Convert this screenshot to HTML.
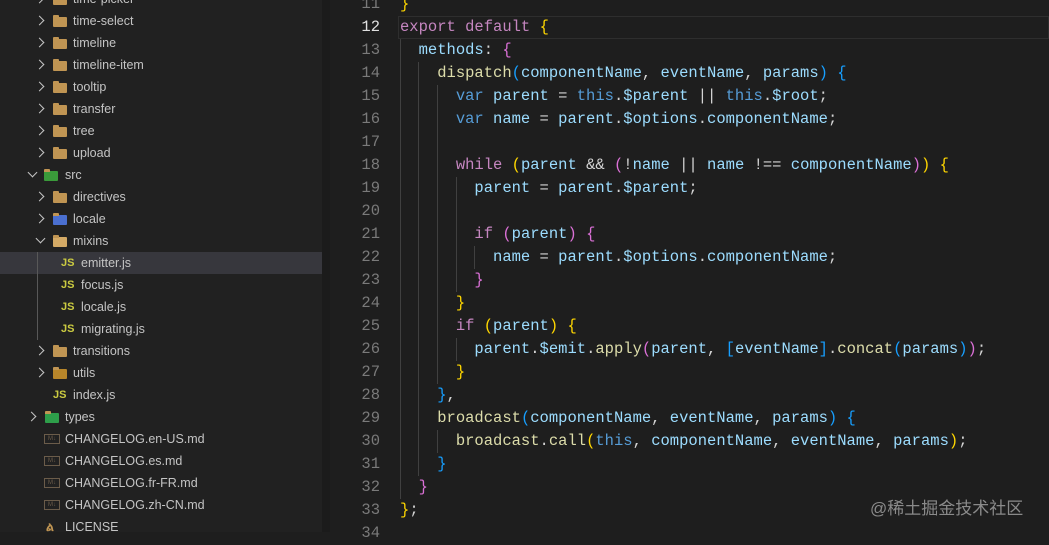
<!DOCTYPE html>
<html><head><meta charset="utf-8"><style>
*{margin:0;padding:0;box-sizing:border-box}
body{width:1049px;height:532px;overflow:hidden;background:#1e1e1e;position:relative;font-family:"Liberation Sans",sans-serif}
#side{position:absolute;left:0;top:0;width:322px;height:532px;background:#212121}
.r{position:absolute;left:0;width:322px;height:22px;font-size:12.5px;color:#c4c4c4;line-height:22px;white-space:nowrap;margin-top:1px}
.r span{position:absolute}
.chev{width:7px;height:7px;border-right:1.5px solid #c5c5c5;border-bottom:1.5px solid #c5c5c5;transform:rotate(-45deg);top:7px}
.down{transform:rotate(45deg);top:5px}
.fold{width:14px;height:10px;background:#c09553;top:7px;border-radius:1px}
.fold:before{content:"";position:absolute;left:0;top:-2px;width:6px;height:3px;background:#c09553;border-radius:1px 1px 0 0}
.js{color:#cbcb41;font-weight:bold;font-size:11px}
.md{width:16px;height:10px;border:1px solid #6b5c4a;top:6px;font-size:6px;color:#6b5c4a;line-height:8px;text-align:center}
#gut{position:absolute;left:330px;top:0;width:50px}
.ln{position:absolute;right:0;width:50px;text-align:right;font-family:"Liberation Mono",monospace;font-size:15.5px;color:#7a7a7a;height:23px;line-height:23px}
.cl{position:absolute;left:400px;font-family:"Liberation Mono",monospace;font-size:15.5px;color:#d4d4d4;height:23px;line-height:23px;white-space:pre}
.k{color:#c586c0}.b{color:#569cd6}.v{color:#9cdcfe}.f{color:#dcdcaa}
.y{color:#ffd700}.p{color:#da70d6}.c{color:#179fff}
.g{position:absolute;width:1px;background:#404040}
</style></head><body>
<div id="side">
<div class="r" style="top:-13px"><span class="chev" style="left:36px"></span><span class="fold" style="left:53px"></span><span style="left:73px">time-picker</span></div>
<div class="r" style="top:9px"><span class="chev" style="left:36px"></span><span class="fold" style="left:53px"></span><span style="left:73px">time-select</span></div>
<div class="r" style="top:31px"><span class="chev" style="left:36px"></span><span class="fold" style="left:53px"></span><span style="left:73px">timeline</span></div>
<div class="r" style="top:53px"><span class="chev" style="left:36px"></span><span class="fold" style="left:53px"></span><span style="left:73px">timeline-item</span></div>
<div class="r" style="top:75px"><span class="chev" style="left:36px"></span><span class="fold" style="left:53px"></span><span style="left:73px">tooltip</span></div>
<div class="r" style="top:97px"><span class="chev" style="left:36px"></span><span class="fold" style="left:53px"></span><span style="left:73px">transfer</span></div>
<div class="r" style="top:119px"><span class="chev" style="left:36px"></span><span class="fold" style="left:53px"></span><span style="left:73px">tree</span></div>
<div class="r" style="top:141px"><span class="chev" style="left:36px"></span><span class="fold" style="left:53px"></span><span style="left:73px">upload</span></div>
<div class="r" style="top:163px"><span class="chev down" style="left:29px"></span><span class="fold" style="left:44px;background:#3a9a3a"></span><span style="left:65px">src</span></div>
<div class="r" style="top:185px"><span class="chev" style="left:36px"></span><span class="fold" style="left:53px"></span><span style="left:73px">directives</span></div>
<div class="r" style="top:207px"><span class="chev" style="left:36px"></span><span class="fold" style="left:53px;background:#4a6fd0"></span><span style="left:73px">locale</span></div>
<div class="r" style="top:229px"><span class="chev down" style="left:37px"></span><span class="fold" style="left:53px;background:#d4aa66"></span><span style="left:73px">mixins</span></div>
<div class="r" style="top:251px;background:#37373d"><span class="js" style="left:61px">JS</span><span style="left:81px">emitter.js</span></div>
<div class="r" style="top:273px"><span class="js" style="left:61px">JS</span><span style="left:81px">focus.js</span></div>
<div class="r" style="top:295px"><span class="js" style="left:61px">JS</span><span style="left:81px">locale.js</span></div>
<div class="r" style="top:317px"><span class="js" style="left:61px">JS</span><span style="left:81px">migrating.js</span></div>
<div class="r" style="top:339px"><span class="chev" style="left:36px"></span><span class="fold" style="left:53px"></span><span style="left:73px">transitions</span></div>
<div class="r" style="top:361px"><span class="chev" style="left:36px"></span><span class="fold" style="left:53px;background:#b8862a"></span><span style="left:73px">utils</span></div>
<div class="r" style="top:383px"><span class="js" style="left:53px">JS</span><span style="left:73px">index.js</span></div>
<div class="r" style="top:405px"><span class="chev" style="left:28px"></span><span class="fold" style="left:45px;background:#2e9e4a"></span><span style="left:65px">types</span></div>
<div class="r" style="top:427px"><span class="md" style="left:44px">M↓</span><span style="left:65px">CHANGELOG.en-US.md</span></div>
<div class="r" style="top:449px"><span class="md" style="left:44px">M↓</span><span style="left:65px">CHANGELOG.es.md</span></div>
<div class="r" style="top:471px"><span class="md" style="left:44px">M↓</span><span style="left:65px">CHANGELOG.fr-FR.md</span></div>
<div class="r" style="top:493px"><span class="md" style="left:44px">M↓</span><span style="left:65px">CHANGELOG.zh-CN.md</span></div>
<div class="r" style="top:515px"><span style="left:46px;color:#c09553;font-weight:bold">ል</span><span style="left:65px">LICENSE</span></div>
<div class="g" style="left:37px;top:252px;height:88px;background:#585858"></div>
</div>
<div style="position:absolute;left:322px;top:0;width:8px;height:532px;background:#1b1b1b"></div>
<div style="position:absolute;left:398px;top:16px;width:651px;height:23px;border:1px solid #2e2e2e"></div>
<div class="g" style="left:400px;top:39px;height:460px"></div>
<div class="g" style="left:418px;top:62px;height:414px"></div>
<div class="g" style="left:437px;top:85px;height:299px"></div>
<div class="g" style="left:437px;top:430px;height:23px"></div>
<div class="g" style="left:456px;top:177px;height:115px"></div>
<div class="g" style="left:474px;top:246px;height:23px"></div>
<div class="g" style="left:456px;top:338px;height:23px"></div>
<div id="gut">
<div class="ln" style="top:-7px">11</div><div class="ln" style="top:16px;color:#e0e0e0">12</div><div class="ln" style="top:39px">13</div><div class="ln" style="top:62px">14</div><div class="ln" style="top:85px">15</div><div class="ln" style="top:108px">16</div><div class="ln" style="top:131px">17</div><div class="ln" style="top:154px">18</div><div class="ln" style="top:177px">19</div><div class="ln" style="top:200px">20</div><div class="ln" style="top:223px">21</div><div class="ln" style="top:246px">22</div><div class="ln" style="top:269px">23</div><div class="ln" style="top:292px">24</div><div class="ln" style="top:315px">25</div><div class="ln" style="top:338px">26</div><div class="ln" style="top:361px">27</div><div class="ln" style="top:384px">28</div><div class="ln" style="top:407px">29</div><div class="ln" style="top:430px">30</div><div class="ln" style="top:453px">31</div><div class="ln" style="top:476px">32</div><div class="ln" style="top:499px">33</div><div class="ln" style="top:522px">34</div>
</div>
<div class="cl" style="top:-7px"><span class="y">}</span></div>
<div class="cl" style="top:16px"><span class="k">export</span> <span class="k">default</span> <span class="y">{</span></div>
<div class="cl" style="top:39px">  <span class="v">methods</span>: <span class="p">{</span></div>
<div class="cl" style="top:62px">    <span class="f">dispatch</span><span class="c">(</span><span class="v">componentName</span>, <span class="v">eventName</span>, <span class="v">params</span><span class="c">)</span> <span class="c">{</span></div>
<div class="cl" style="top:85px">      <span class="b">var</span> <span class="v">parent</span> = <span class="b">this</span>.<span class="v">$parent</span> || <span class="b">this</span>.<span class="v">$root</span>;</div>
<div class="cl" style="top:108px">      <span class="b">var</span> <span class="v">name</span> = <span class="v">parent</span>.<span class="v">$options</span>.<span class="v">componentName</span>;</div>
<div class="cl" style="top:154px">      <span class="k">while</span> <span class="y">(</span><span class="v">parent</span> &amp;&amp; <span class="p">(</span>!<span class="v">name</span> || <span class="v">name</span> !== <span class="v">componentName</span><span class="p">)</span><span class="y">)</span> <span class="y">{</span></div>
<div class="cl" style="top:177px">        <span class="v">parent</span> = <span class="v">parent</span>.<span class="v">$parent</span>;</div>
<div class="cl" style="top:223px">        <span class="k">if</span> <span class="p">(</span><span class="v">parent</span><span class="p">)</span> <span class="p">{</span></div>
<div class="cl" style="top:246px">          <span class="v">name</span> = <span class="v">parent</span>.<span class="v">$options</span>.<span class="v">componentName</span>;</div>
<div class="cl" style="top:269px">        <span class="p">}</span></div>
<div class="cl" style="top:292px">      <span class="y">}</span></div>
<div class="cl" style="top:315px">      <span class="k">if</span> <span class="y">(</span><span class="v">parent</span><span class="y">)</span> <span class="y">{</span></div>
<div class="cl" style="top:338px">        <span class="v">parent</span>.<span class="v">$emit</span>.<span class="f">apply</span><span class="p">(</span><span class="v">parent</span>, <span class="c">[</span><span class="v">eventName</span><span class="c">]</span>.<span class="f">concat</span><span class="c">(</span><span class="v">params</span><span class="c">)</span><span class="p">)</span>;</div>
<div class="cl" style="top:361px">      <span class="y">}</span></div>
<div class="cl" style="top:384px">    <span class="c">}</span>,</div>
<div class="cl" style="top:407px">    <span class="f">broadcast</span><span class="c">(</span><span class="v">componentName</span>, <span class="v">eventName</span>, <span class="v">params</span><span class="c">)</span> <span class="c">{</span></div>
<div class="cl" style="top:430px">      <span class="f">broadcast</span>.<span class="f">call</span><span class="y">(</span><span class="b">this</span>, <span class="v">componentName</span>, <span class="v">eventName</span>, <span class="v">params</span><span class="y">)</span>;</div>
<div class="cl" style="top:453px">    <span class="c">}</span></div>
<div class="cl" style="top:476px">  <span class="p">}</span></div>
<div class="cl" style="top:499px"><span class="y">}</span>;</div>
<div style="position:absolute;left:870px;top:494px;font-size:17px;color:#8a8a8a;font-family:'Liberation Sans','Noto Sans CJK SC',sans-serif">@稀土掘金技术社区</div>
</body></html>
